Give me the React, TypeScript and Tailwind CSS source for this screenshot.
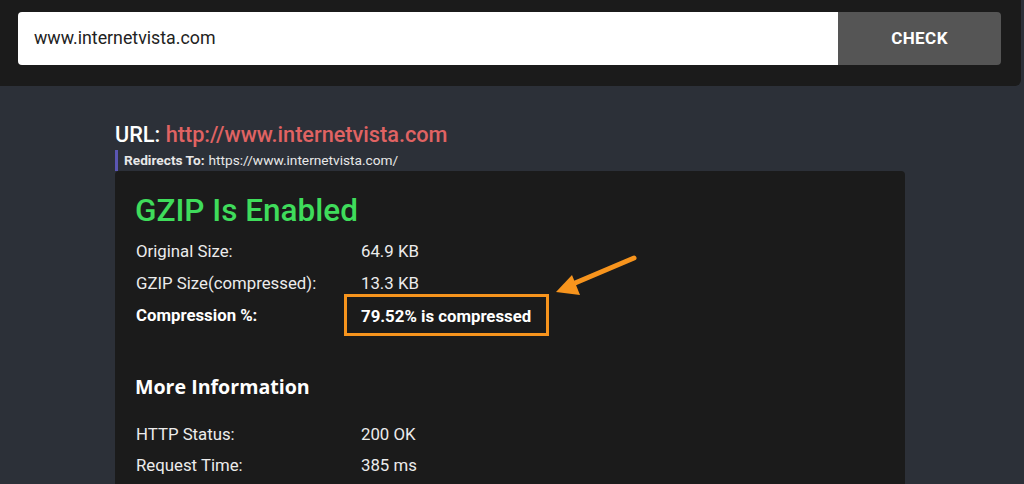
const rows = [
  { label: "Original Size:", value: "64.9 KB" },
  { label: "GZIP Size(compressed):", value: "13.3 KB" },
];

const moreInfo = [
  { label: "HTTP Status:", value: "200 OK" },
  { label: "Request Time:", value: "385 ms" },
];

const App = () => {
  return (
    <div className="relative w-full h-[484px] overflow-hidden bg-[#2c3038] font-['Roboto','Liberation_Sans',sans-serif] text-[#ececec]">
      {/* Search bar */}
      <header className="w-[1021px] h-[86px] bg-[#1b1b1b] rounded-br-[6px] px-[18px] pt-[12px]">
        <div className="flex h-[53px] w-[983px]">
          <div className="flex-1 bg-white rounded-l-[4px] flex items-center px-[16px] text-[17.8px] text-[#222]">
            www.internetvista.com
          </div>
          <button className="w-[163px] bg-[#555555] rounded-r-[4px] text-white font-bold text-[17px] tracking-wide">
            CHECK
          </button>
        </div>
      </header>

      <main className="pl-[115px] pt-[36px]">
        <h2 className="text-[21.7px] leading-[25px] font-medium">
          <span className="text-white">URL: </span>
          <span className="text-[#e06363]">http://www.internetvista.com</span>
        </h2>
        <p className="mt-[3px] border-l-[3px] border-[#5b56b3] pl-[6px] h-[21px] flex items-center text-[13.7px] text-[#e8e8e8]">
          <span className="font-bold mr-1">Redirects To:</span>
          https://www.internetvista.com/
        </p>

        {/* Result card */}
        <section className="w-[790px] h-[400px] bg-[#1b1b1b] rounded-[4px] px-[20px] pt-[22px]">
          <h1 className="text-[31.5px] leading-[36px] font-medium text-[#3fdc5b]">
            GZIP Is Enabled
          </h1>
          <div className="mt-[7px] text-[16.8px]">
            {rows.map((r) => (
              <div key={r.label} className="flex h-[32px] items-center">
                <span className="w-[226px] pl-[1px]">{r.label}</span>
                <span>{r.value}</span>
              </div>
            ))}
            <div className="flex h-[31px] items-center font-bold text-white">
              <span className="w-[226px] pl-[1px]">Compression %:</span>
              <span className="relative leading-[18px]">
                79.52% is compressed
                <span className="absolute -left-[17px] -right-[18px] -top-[13px] -bottom-[11px] border-[3px] border-[#f7941d]" />
              </span>
            </div>
          </div>

          <h3 className="mt-[42px] text-[19.6px] leading-[28px] font-bold font-['Open_Sans',sans-serif] text-white">
            More Information
          </h3>
          <div className="mt-[18px] text-[16.8px]">
            {moreInfo.map((r) => (
              <div key={r.label} className="flex h-[31px] items-center">
                <span className="w-[226px] pl-[1px]">{r.label}</span>
                <span>{r.value}</span>
              </div>
            ))}
          </div>
        </section>
      </main>

      {/* Annotation arrow */}
      <svg className="absolute left-[540px] top-[245px]" width="110" height="60" viewBox="0 0 110 60">
        <line x1="94" y1="13" x2="28" y2="41" stroke="#f7941d" strokeWidth="5" strokeLinecap="round" />
        <polygon points="16,47 32,30 40,50" fill="#f7941d" />
      </svg>
    </div>
  );
};

export default App;
